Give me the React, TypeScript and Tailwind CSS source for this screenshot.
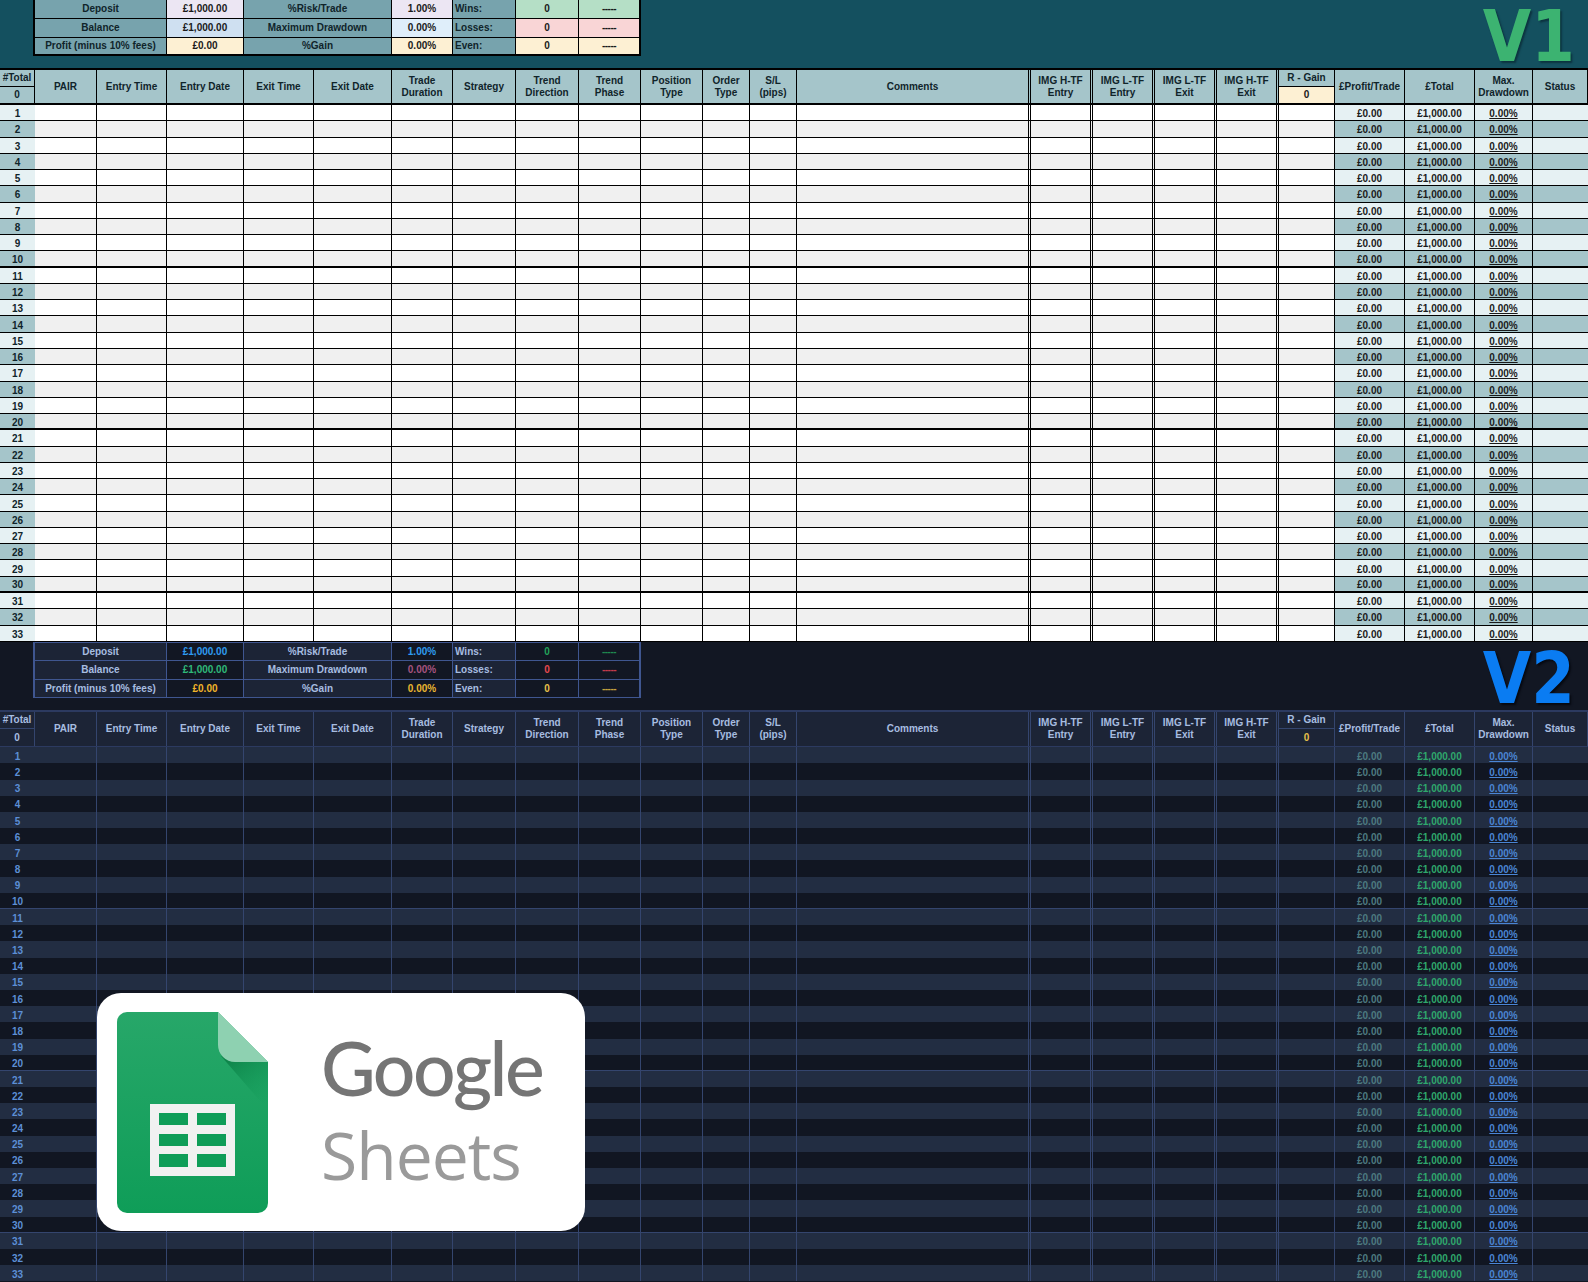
const columns = "grid grid-cols-[35px_62px_70px_77px_70px_78px_61px_63px_63px_62px_62px_47px_47px_234px_62px_62px_62px_62px_56px_70px_70px_58px_55px]";

const headers = ["PAIR", "Entry Time", "Entry Date", "Exit Time", "Exit Date", "Trade Duration", "Strategy", "Trend Direction", "Trend Phase", "Position Type", "Order Type", "S/L (pips)", "Comments", "IMG H-TF Entry", "IMG L-TF Entry", "IMG L-TF Exit", "IMG H-TF Exit"];

const rows = Array.from({ length: 33 }, (_, i) => i + 1);
const blanks = Array.from({ length: 18 }, (_, i) => i + 1);

const v1 = {
  page: "bg-[#14505f]",
  logo: "text-[#3cb371] [text-shadow:2px_2px_2px_#0c3440]",
  summaryBox: "grid-rows-[18.5px_19px_16.5px] border-b-2 border-l-2 border-r-2 border-black",
  summaryLine: "border-black",
  label: "bg-[#77a3ad] text-[#10242a]",
  values: {
    deposit: "bg-[#ece6f3] text-[#1a1a1a]",
    balance: "bg-[#cfe0f1] text-[#1a1a1a]",
    profit: "bg-[#fdf0d3] text-[#1a1a1a]",
    risk: "bg-[#ece6f3] text-[#1a1a1a]",
    drawdown: "bg-[#dfeefa] text-[#1a1a1a]",
    gain: "bg-[#fdf0d3] text-[#1a1a1a]",
    wins: "bg-[#b5dfc6] text-[#1a1a1a]",
    winsDash: "bg-[#b5dfc6] text-[#1a1a1a]",
    losses: "bg-[#f9d5d6] text-[#1a1a1a]",
    lossesDash: "bg-[#f9d5d6] text-[#1a1a1a]",
    even: "bg-[#fdf0d3] text-[#1a1a1a]",
    evenDash: "bg-[#fdf0d3] text-[#1a1a1a]",
  },
  headRow: "h-[37px] border-t-2 border-b-2 border-black",
  head: "bg-[#a5c5ca] text-[#10242a] border-r border-black",
  headDouble: "bg-[#a5c5ca] text-[#10242a] border-r-[3px] border-double border-black",
  headSplit: "border-black",
  gain: "bg-[#fdf0d3] text-[#1a1a1a]",
  row: "h-[16.27px] border-b border-black",
  rowTen: "h-[16.27px] border-b-2 border-black",
  oddCell: "bg-white",
  evenCell: "bg-[#f0f0f0]",
  line: "border-r border-black",
  lineDouble: "border-r-[3px] border-double border-black",
  oddSide: "bg-[#e6f1f3]",
  evenSide: "bg-[#a5c5ca]",
  number: "text-[#10242a]",
  profit: "text-[#1a1a1a]",
  total: "text-[#1a1a1a]",
  drawdown: "text-[#1a1a1a]",
};

const v2 = {
  page: "bg-[#121723]",
  logo: "text-[#0a7cf2] [text-shadow:2px_2px_2px_#070a12]",
  summaryBox: "grid-rows-[18px_19px_17px] border-2 border-t border-[#3f5690]",
  summaryLine: "border-[#3f5690]",
  label: "bg-[#1c2436] text-[#a7bde0]",
  values: {
    deposit: "bg-[#121723] text-[#2f9bf0]",
    balance: "bg-[#121723] text-[#2fb878]",
    profit: "bg-[#121723] text-[#f0b429]",
    risk: "bg-[#121723] text-[#2f9bf0]",
    drawdown: "bg-[#121723] text-[#a5537f]",
    gain: "bg-[#121723] text-[#eab530]",
    wins: "bg-[#121723] text-[#22a35a]",
    winsDash: "bg-[#121723] text-[#1f8a50]",
    losses: "bg-[#121723] text-[#e5484d]",
    lossesDash: "bg-[#121723] text-[#c53b4b]",
    even: "bg-[#121723] text-[#e8c04a]",
    evenDash: "bg-[#121723] text-[#c4a23e]",
  },
  headRow: "h-[37.4px] border-t-2 border-b border-[#2c3a60]",
  head: "bg-[#1c2436] text-[#a7bde0] border-r border-[#34456e]",
  headDouble: "bg-[#1c2436] text-[#a7bde0] border-r-[3px] border-double border-[#34456e]",
  headSplit: "border-[#34456e]",
  gain: "bg-[#1c2436] text-[#e8c04a]",
  row: "h-[16.2px]",
  rowTen: "h-[16.2px] border-b border-[#34456e]",
  oddCell: "bg-[#222d42]",
  evenCell: "bg-[#111622]",
  line: "border-r border-[#34456e]",
  lineDouble: "border-r-[3px] border-double border-[#34456e]",
  oddSide: "bg-[#222d42]",
  evenSide: "bg-[#111622]",
  number: "text-[#5c8fd6]",
  profit: "text-[#4d7a80]",
  total: "text-[#2fa76c]",
  drawdown: "text-[#4a85d4]",
};

type Theme = typeof v1;

function Summary({ t }: { t: Theme }) {
  const line = "flex items-center justify-center border-r border-b " + t.summaryLine;
  const last = "flex items-center justify-center tracking-[-0.5px] border-b " + t.summaryLine;
  const left = "flex items-center pl-[2px] border-r border-b " + t.summaryLine;
  return (
    <div className={"ml-[33px] grid h-[56px] w-[608px] grid-cols-[132px_77px_148px_61px_63px_63px_60px] text-[10px] font-bold " + t.summaryBox}>
      <div className={line + " " + t.label}>Deposit</div>
      <div className={line + " " + t.values.deposit}>£1,000.00</div>
      <div className={line + " " + t.label}>%Risk/Trade</div>
      <div className={line + " " + t.values.risk}>1.00%</div>
      <div className={left + " " + t.label}>Wins:</div>
      <div className={line + " " + t.values.wins}>0</div>
      <div className={last + " " + t.values.winsDash}>-----</div>

      <div className={line + " " + t.label}>Balance</div>
      <div className={line + " " + t.values.balance}>£1,000.00</div>
      <div className={line + " " + t.label}>Maximum Drawdown</div>
      <div className={line + " " + t.values.drawdown}>0.00%</div>
      <div className={left + " " + t.label}>Losses:</div>
      <div className={line + " " + t.values.losses}>0</div>
      <div className={last + " " + t.values.lossesDash}>-----</div>

      <div className={line + " border-b-0 " + t.label}>Profit (minus 10% fees)</div>
      <div className={line + " border-b-0 " + t.values.profit}>£0.00</div>
      <div className={line + " border-b-0 " + t.label}>%Gain</div>
      <div className={line + " border-b-0 " + t.values.gain}>0.00%</div>
      <div className={left + " border-b-0 " + t.label}>Even:</div>
      <div className={line + " border-b-0 " + t.values.even}>0</div>
      <div className={last + " border-b-0 " + t.values.evenDash}>-----</div>
    </div>
  );
}

function SplitHead({ t, top, bottom, gain }: { t: Theme; top: string; bottom: string; gain?: boolean }) {
  return (
    <div className={"flex flex-col " + t.head}>
      <div className={"flex flex-1 items-center justify-center border-b " + t.headSplit}>{top}</div>
      <div className={"flex flex-1 items-center justify-center " + (gain ? t.gain : "")}>{bottom}</div>
    </div>
  );
}

function Sheet({ t, name }: { t: Theme; name: string }) {
  return (
    <section className={"font-['Liberation_Sans',Arial,sans-serif] " + t.page}>
      <div className="relative h-[68px]">
        <Summary t={t} />
        <div className={"absolute right-[13px] top-0 origin-right scale-x-[0.87] font-['DejaVu_Sans',sans-serif] text-[72px] font-bold leading-[72px] " + t.logo}>{name}</div>
      </div>
      <div className={columns + " text-center text-[10px] font-bold leading-[12px] " + t.headRow}>
        <SplitHead t={t} top="#Total" bottom="0" />
        {headers.map((h, i) => (
          <div key={h + i} className={"flex items-center justify-center px-1 " + (i >= 12 ? t.headDouble : t.head)}>{h}</div>
        ))}
        <SplitHead t={t} top="R - Gain" bottom="0" gain />
        <div className={"flex items-center justify-center whitespace-nowrap " + t.head}>£Profit/Trade</div>
        <div className={"flex items-center justify-center " + t.head}>£Total</div>
        <div className={"flex items-center justify-center " + t.head}>Max. Drawdown</div>
        <div className={"flex items-center justify-center " + t.head}>Status</div>
      </div>
      {rows.map((n) => {
        const side = n % 2 ? t.oddSide : t.evenSide;
        const cell = n % 2 ? t.oddCell : t.evenCell;
        return (
          <div key={n} className={columns + " text-center text-[10px] font-bold leading-none " + (n % 10 === 0 ? t.rowTen : t.row)}>
            <div className={"flex items-center justify-center pt-[3px] " + side + " " + t.number}>{n}</div>
            {blanks.map((c) => (
              <div key={c} className={cell + " " + (c >= 13 && c <= 17 ? t.lineDouble : t.line)} />
            ))}
            <div className={"flex items-center justify-center pt-[3px] " + side + " " + t.line + " " + t.profit}>£0.00</div>
            <div className={"flex items-center justify-center pt-[3px] " + side + " " + t.line + " " + t.total}>£1,000.00</div>
            <div className={"flex items-center justify-center pt-[3px] underline " + side + " " + t.line + " " + t.drawdown}>0.00%</div>
            <div className={side} />
          </div>
        );
      })}
    </section>
  );
}

function SheetsIcon() {
  return (
    <svg width="151" height="201" viewBox="0 0 151 201" className="shrink-0">
      <defs>
        <linearGradient id="doc" x1="0" y1="0" x2="0" y2="1">
          <stop offset="0" stopColor="#27a769" />
          <stop offset="1" stopColor="#0f9d58" />
        </linearGradient>
        <linearGradient id="shade" x1="0.2" y1="0" x2="0.8" y2="1">
          <stop offset="0" stopColor="#0c7f46" stopOpacity="0.9" />
          <stop offset="1" stopColor="#0f9d58" stopOpacity="0" />
        </linearGradient>
      </defs>
      <path d="M10 0H101L151 50V191a10 10 0 0 1-10 10H10A10 10 0 0 1 0 191V10A10 10 0 0 1 10 0Z" fill="url(#doc)" />
      <path d="M104 44L151 50V98Z" fill="url(#shade)" />
      <path d="M101 0L151 50H118A17 17 0 0 1 101 33Z" fill="#8ed1b1" />
      <rect x="33" y="92" width="85" height="72" fill="#f1f1f1" />
      <rect x="42" y="101" width="29" height="12" fill="#0f9d58" />
      <rect x="80" y="101" width="29" height="12" fill="#0f9d58" />
      <rect x="42" y="122" width="29" height="12" fill="#0f9d58" />
      <rect x="80" y="122" width="29" height="12" fill="#0f9d58" />
      <rect x="42" y="142" width="29" height="13" fill="#0f9d58" />
      <rect x="80" y="142" width="29" height="13" fill="#0f9d58" />
    </svg>
  );
}

export default function App() {
  return (
    <div className="relative h-[1282px] w-[1588px] overflow-hidden bg-[#121723]">
      <Sheet t={v1} name="V1" />
      <Sheet t={v2 as Theme} name="V2" />
      <div className="absolute left-[97px] top-[993px] flex h-[238px] w-[488px] items-center gap-[53px] rounded-[24px] bg-white pl-[20px]">
        <SheetsIcon />
        <div className="flex flex-col pb-[6px]">
          <div className="mb-[6px] font-['Lato',sans-serif] text-[75px] font-medium leading-[84px] tracking-[-2.5px] text-[#757575]">Google</div>
          <div className="font-['Open_Sans',sans-serif] text-[66px] leading-[78px] tracking-[-1px] text-[#9a9a9a]">Sheets</div>
        </div>
      </div>
    </div>
  );
}
